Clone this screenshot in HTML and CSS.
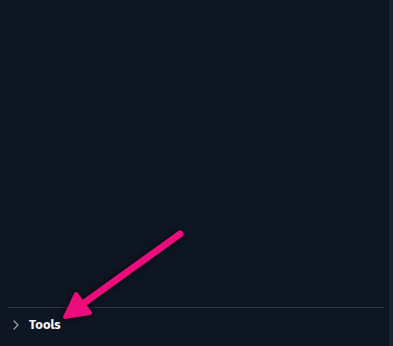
FILE: index.html
```html
<!DOCTYPE html>
<html>
<head>
<meta charset="utf-8">
<link rel="stylesheet" href="styles.css">
</head>
<body>
<div class="app">
  <div class="panel">
    <div class="content"></div>
    <div class="section">
      <svg class="chev" width="8" height="10" viewBox="0 0 8 10"><path d="M2 1 L6 5 L2 9" fill="none" stroke="#9ca3af" stroke-width="1.2" stroke-linecap="round" stroke-linejoin="round"/></svg>
      <span class="label">Tools</span>
    </div>
  </div>
  <div class="scrollbar"></div>
  <svg class="arrow" width="393" height="346" viewBox="0 0 393 346">
    <line x1="180" y1="234" x2="84" y2="303" stroke="#ec0c7c" stroke-width="7" stroke-linecap="round"/>
    <path d="M65 317 L76 294 L90 313 Z" fill="#ec0c7c" stroke="#ec0c7c" stroke-width="4" stroke-linejoin="round"/>
  </svg>
</div>
</body>
</html>
```

FILE: styles.css
```css
html, body {
  margin: 0;
  padding: 0;
  background: #0f1623;
}
.app {
  position: relative;
  width: 393px;
  height: 346px;
  display: flex;
  overflow: hidden;
}
.panel {
  flex: 1;
  display: flex;
  flex-direction: column;
  padding: 0 5px 0 8px;
}
.content {
  flex: 1;
}
.section {
  height: 39px;
  border-top: 1px solid #2c3443;
  display: flex;
  align-items: center;
  gap: 9px;
  padding-left: 4px;
  padding-bottom: 5px;
  box-sizing: border-box;
}
.chev {
  display: block;
}
.label {
  font-family: "Fira Sans", "Open Sans", sans-serif;
  font-weight: 700;
  font-size: 13px;
  color: #f3f4f6;
  letter-spacing: 0;
}
.scrollbar {
  width: 4px;
  background: #1a2230;
}
.arrow {
  position: absolute;
  left: 0;
  top: 0;
  filter: drop-shadow(0 0 3px rgba(0,0,0,0.8));
  pointer-events: none;
}
```
